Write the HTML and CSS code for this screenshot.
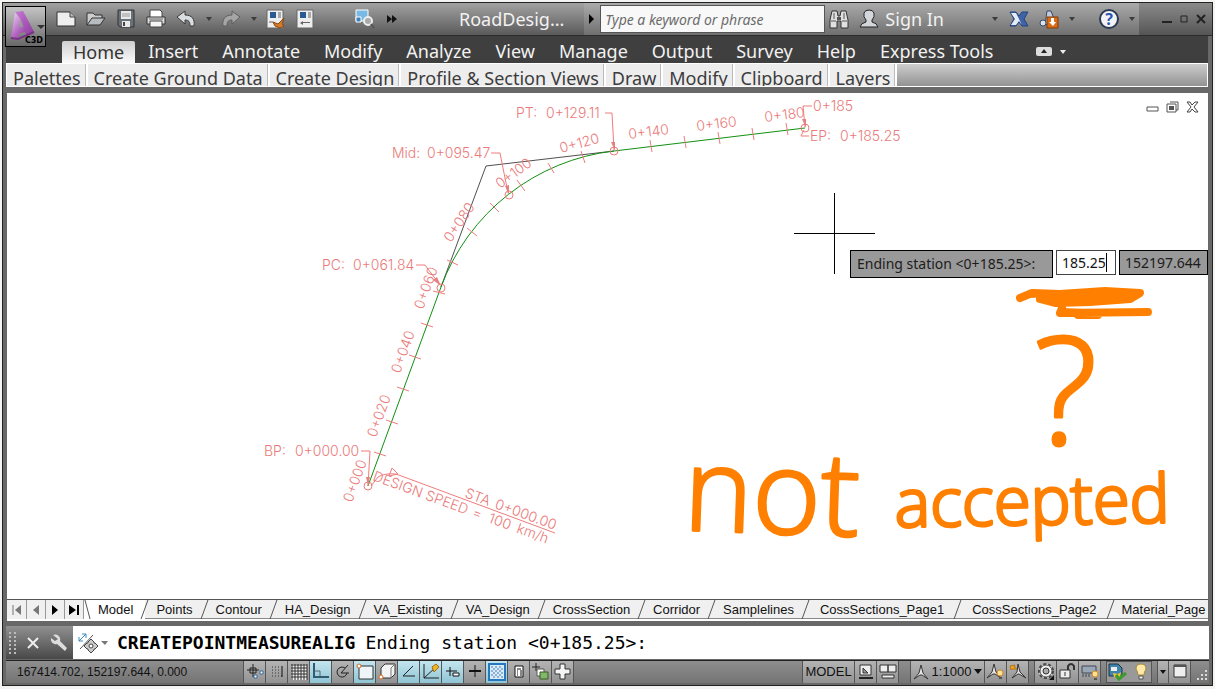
FILE: index.html
```html
<!DOCTYPE html>
<html lang="en">
<head>
    <meta charset="utf-8">
    <title>RoadDesign</title>
    <link rel="stylesheet" href="styles.css">
</head>
<body>
    <div class="window">
        <header class="titlebar">
            <button class="app-button" aria-label="Application menu">
                <svg width="38" height="38" viewBox="0 0 38 38">
                    <defs>
                        <linearGradient id="logo" x1="0" y1="0" x2="1" y2="1">
                            <stop offset="0" stop-color="#f3dff5"/>
                            <stop offset="0.5" stop-color="#b568c4"/>
                            <stop offset="1" stop-color="#64256f"/>
                        </linearGradient>
                    </defs>
                    <path d="M4 30 L8 4 L16 3 L27 24 L20 28 L18 24 L12 26 L11 31 Z M12 20 L17 18 L13 10 Z" fill="url(#logo)" fill-rule="evenodd"/>
                    <path d="M16 3 L27 24 L20 28 L13 10 L8 4 Z" fill="#a44fb5" opacity="0.6"/>
                    <path d="M4 30 L11 31 L27 24" fill="none" stroke="#7a3389" stroke-width="2"/>
                    <path d="M30 17h8l-4 4z" fill="#333"/>
                </svg>
                <span>C3D</span>
            </button>
            <div class="quick-access">
                <button aria-label="New"><svg width="20" height="20" viewBox="0 0 20 20"><path d="M1 3h13l5 5v9H1z" fill="#eee" stroke="#333"/><path d="M14 3v5h5" fill="#bbb" stroke="#444"/></svg></button>
                <button aria-label="Open"><svg width="20" height="20" viewBox="0 0 20 20"><path d="M1 16V4h6l2 2h7v3" fill="#ccc" stroke="#333"/><path d="M1 16l5-7h13l-5 7z" fill="#b6bcc0" stroke="#333"/></svg></button>
                <button aria-label="Save"><svg width="20" height="20" viewBox="0 0 20 20"><path d="M2 1h16v17H4l-2-2z" fill="#687078" stroke="#333"/><path d="M5 2h10v8H5zM6 12h8v6H6z" fill="#e8e8e8"/><path d="M7 13h2v4H7z" fill="#444"/><path d="M6 5h8M6 7h8" stroke="#999"/></svg></button>
                <button aria-label="Print"><svg width="20" height="20" viewBox="0 0 20 20"><path d="M4 8V1h10l2 2v5" fill="#fff" stroke="#444"/><path d="M1 8h18v7H1z" fill="#ddd" stroke="#333"/><path d="M4 12h12v6H4z" fill="#f5f5f5" stroke="#444"/><path d="M3 10h14" stroke="#666"/></svg></button>
                <button aria-label="Undo"><svg width="20" height="20" viewBox="0 0 20 20"><path d="M1 8l8-6v4c7 0 10 4 9 11h-4c0-4-1-6-5-6v4z" fill="#d9dde0" stroke="#3a3a3a"/></svg></button>
                <button class="drop" aria-label="Undo list"></button>
                <button aria-label="Redo"><svg width="20" height="20" viewBox="0 0 20 20"><path d="M19 8l-8-6v4C4 6 1 10 2 17h4c0-4 1-6 5-6v4z" fill="#a5a5a5" stroke="#5e5e5e"/></svg></button>
                <button class="drop" aria-label="Redo list"></button>
                <button aria-label="Sheet set"><svg width="20" height="20" viewBox="0 0 20 20"><path d="M1 1h16v18H1z" fill="#eee" stroke="#666"/><path d="M4 3h6v6H4z" fill="#285a94"/><path d="M12 4h3M12 6h3M12 8h3M3 13h4" stroke="#666"/><path d="M7 13l5 2 6-6-2 6 2 2-4 2-5-2z" fill="#d67b28" stroke="#8a4a13"/></svg></button>
                <button aria-label="Layer properties"><svg width="20" height="20" viewBox="0 0 20 20"><path d="M1 1h16v18H1z" fill="#eee" stroke="#666"/><path d="M4 3h6v6H4z" fill="#285a94"/><path d="M12 4h3M12 6h3M12 8h3" stroke="#666"/><path d="M4 14l3-2v1h7v1H7v2z" fill="#666"/></svg></button>
                <button class="find" aria-label="Find object"><svg width="20" height="20" viewBox="0 0 20 20"><path d="M1 1h12v11H1z" fill="#79b9e4" stroke="#fff"/><path d="M1 8h5v5H1z" fill="#3d81b9" stroke="#fff"/><circle cx="13" cy="12" r="4" fill="#aaa" stroke="#eee" stroke-width="2"/><path d="M16 15l3 4" stroke="#555" stroke-width="2"/></svg></button>
                <button class="more" aria-label="More tools"><svg width="12" height="10" viewBox="0 0 12 10"><path d="M2 1l5 4-5 4zM7 1l5 4-5 4z" fill="#111"/></svg></button>
            </div>
            <h1>RoadDesig...</h1>
            <div class="infocenter">
                <svg class="arrow-right" width="5" height="10" viewBox="0 0 5 10"><path d="M0 0l5 5-5 5z" fill="#000"/></svg>
                <input class="search" type="text" aria-label="Search" placeholder="Type a keyword or phrase">
                <button aria-label="Search help"><svg width="20" height="20" viewBox="0 0 20 20"><path d="M3 2h5l1 5h2l1-5h5l2 9v8h-7v-7H8v7H1v-8z" fill="#e0e0e0" stroke="#333"/><path d="M8 8h4v3H8z" fill="#555"/><path d="M2 12h5M13 12h5M5 4v6M15 4v6" stroke="#555"/></svg></button>
                <button class="sign-in"><svg width="20" height="20" viewBox="0 0 20 20"><path d="M1 18q1-4 6-5v-2Q4 8 5 4q1-3 5-3t5 3q1 4-2 7v2q5 1 6 5z" fill="#d3d6da" stroke="#222"/></svg>Sign In</button>
                <button class="drop" aria-label="Account menu"></button>
                <button class="exchange" aria-label="Exchange"><svg width="20" height="20" viewBox="0 0 20 20"><path d="M1 3h6l3 4 3-4h6l-4 7 4 7h-6l-3-4-3 4H1l4-7z" fill="#3e64a8" stroke="#26427e"/><path d="M2 4h5l6 12-3-4-3 4H2l4-6z" fill="#e6ecf5"/></svg></button>
                <button aria-label="Updates"><svg width="20" height="20" viewBox="0 0 20 20"><path d="M8 2h4l5 13H9L6 16z" fill="#c5ccd6" stroke="#34496c"/><circle cx="4" cy="14" r="3" fill="#dde3ec" stroke="#34496c"/><path d="M8 8h11v11H8z" fill="#d96c16" stroke="#843b05"/><path d="M12 9h3v4h2l-3 4-4-4h2z" fill="#fff"/></svg></button>
                <button class="drop" aria-label="Updates list"></button>
                <button class="help" aria-label="Help">?</button>
                <button class="drop" aria-label="Help menu"></button>
            </div>
            <div class="window-controls">
                <button aria-label="Minimize"><svg width="10" height="10" viewBox="0 0 10 10"><path d="M0 8h10" stroke="#222" stroke-width="2"/></svg></button>
                <button aria-label="Maximize"><svg width="10" height="10" viewBox="0 0 10 10"><path d="M2 2h6v6H2z" fill="none" stroke="#222"/></svg></button>
                <button aria-label="Close"><svg width="10" height="10" viewBox="0 0 10 10"><path d="M1 1l8 8M9 1l-8 8" stroke="#222" stroke-width="2"/></svg></button>
            </div>
        </header>

        <nav class="ribbon-tabs">
            <a href="#" class="active">Home</a>
            <a href="#">Insert</a>
            <a href="#">Annotate</a>
            <a href="#">Modify</a>
            <a href="#">Analyze</a>
            <a href="#">View</a>
            <a href="#">Manage</a>
            <a href="#">Output</a>
            <a href="#">Survey</a>
            <a href="#">Help</a>
            <a href="#">Express Tools</a>
            <button class="ribbon-toggle" aria-label="Minimize ribbon"><svg width="30" height="10" viewBox="0 0 30 10"><rect x="0" y="0" width="16" height="9" rx="2" fill="#ddd"/><path d="M5 6l3-4 3 4z" fill="#222"/><path d="M24 3h6l-3 4z" fill="#eee"/></svg></button>
        </nav>

        <div class="panels">
            <button>Palettes</button>
            <button>Create Ground Data</button>
            <button>Create Design</button>
            <button>Profile &amp; Section Views</button>
            <button>Draw</button>
            <button>Modify</button>
            <button>Clipboard</button>
            <button>Layers</button>
        </div>

        <main class="drawing">
            <svg class="model" width="100%" height="100%">
                <g transform="translate(-7 -93)">
                    <!-- tangents and alignment -->
                    <path class="tangent" d="M441 287L486 166L614 151"/>
                    <path class="alignment" d="M368 486L441 287A210 210 0 0 1 614 151L805 128"/>
                    <!-- station ticks -->
                    <path class="mark" d="M374 452l12 4M386 420l12 4M397 387l12 4M409 355l12 4M421 323l12 4M433 291l12 3M447 260l11 5M467 228l10 8M490 203l9 9M517 180l8 11M548 163l6 10M581 151l4 12M650 140l2 12M684 136l2 12M718 132l2 12M752 128l2 12M786 123l2 12"/>
                    <!-- geometry points and leaders -->
                    <g class="mark">
                        <circle cx="368" cy="486" r="4"/>
                        <circle cx="441" cy="288" r="4"/>
                        <circle cx="509" cy="195" r="4"/>
                        <circle cx="614" cy="151" r="4"/>
                        <circle cx="805" cy="128" r="4"/>
                        <path d="M361 451H370L368 486M416 265H425L440 285M491 153H500L508 193M605 113H612L614 150M812 106H803L805 127M809 136H801L804 130"/>
                        <path d="M371 486L378 477Q384 473 396 474L555 533M389 476L392 468L398 474Z"/>
                    </g>
                    <path class="arrowhead" d="M366 477h4l-2 9zM433 280l4-3 4 9zM505 186l4-1v10zM611 142h4v9zM802 119h4v9z"/>
                    <g class="station">
                        <text transform="translate(352 503) rotate(-70)">0+000</text>
                        <text transform="translate(376 438) rotate(-70)">0+020</text>
                        <text transform="translate(400 374) rotate(-70)">0+040</text>
                        <text transform="translate(423 310) rotate(-70)">0+060</text>
                        <text transform="translate(451 243) rotate(-56)">0+080</text>
                        <text transform="translate(500 189) rotate(-36)">0+100</text>
                        <text transform="translate(561 153) rotate(-15)">0+120</text>
                        <text transform="translate(629 139) rotate(-7)">0+140</text>
                        <text transform="translate(697 131) rotate(-7)">0+160</text>
                        <text transform="translate(765 122) rotate(-7)">0+180</text>
                        <text><tspan x="264" y="456">BP:</tspan><tspan x="295">0+000.00</tspan></text>
                        <text><tspan x="322" y="270">PC:</tspan><tspan x="353">0+061.84</tspan></text>
                        <text><tspan x="392" y="158">Mid:</tspan><tspan x="427">0+095.47</tspan></text>
                        <text><tspan x="516" y="118">PT:</tspan><tspan x="546">0+129.11</tspan></text>
                        <text x="813" y="111">0+185</text>
                        <text><tspan x="810" y="141">EP:</tspan><tspan x="840">0+185.25</tspan></text>
                        <text transform="translate(464 497) rotate(20)"><tspan x="0">STA</tspan><tspan x="32">0+000.00</tspan></text>
                        <text transform="translate(372 480) rotate(20)"><tspan x="0">DESIGN</tspan><tspan x="56">SPEED</tspan><tspan x="106">=</tspan><tspan x="123">100</tspan><tspan x="153">km/h</tspan></text>
                    </g>
                    <path class="cursor" d="M794 233H875M834 193V274"/>
                    <!-- red-lining -->
                    <path class="scribble" d="M1020 298L1032 293L1060 294L1105 291L1140 293L1130 299L1090 302L1055 303L1040 299L1062 297L1110 296M1062 308L1060 313L1148 312M1078 315H1098"/>
                    <g class="note">
                        <text class="note-mark" x="1034" y="444">?</text>
                        <text class="note-large" transform="translate(683 530) rotate(2)">not</text>
                        <text class="note-small" transform="translate(895 527) rotate(-1)">accepted</text>
                    </g>
                </g>
            </svg>
            <div class="document-controls">
                <button aria-label="Minimize drawing"><svg width="13" height="12" viewBox="0 0 13 12"><path d="M1 6h11v4H1z" fill="#fff" stroke="#555"/></svg></button>
                <button aria-label="Restore drawing"><svg width="13" height="12" viewBox="0 0 13 12"><path d="M4 1h8v8h-2M1 3h9v8H1z" fill="#fff" stroke="#555"/><path d="M4 6h3v2H4z" fill="none" stroke="#555" stroke-width="2"/></svg></button>
                <button aria-label="Close drawing"><svg width="13" height="12" viewBox="0 0 13 12"><path d="M1 1h3l2 3 3-3h3L8 6l4 5H9L6 8l-2 3H1l4-5z" fill="#fff" stroke="#444"/></svg></button>
            </div>
            <div class="dynamic-input">
                <label for="station">Ending station &lt;0+185.25&gt;:</label>
                <div class="station-box"><input id="station" type="text" value="185.25"></div>
                <output>152197.644</output>
            </div>
        </main>

        <nav class="layout-tabs">
            <div class="tab-scroll">
                <button aria-label="First tab"><svg width="12" height="12" viewBox="0 0 12 12"><path d="M2 1v10" stroke="#777"/><path d="M10 1v10L4 6z" fill="#777"/></svg></button>
                <button aria-label="Previous tab"><svg width="12" height="12" viewBox="0 0 12 12"><path d="M9 1v10L3 6z" fill="#777"/></svg></button>
                <button aria-label="Next tab"><svg width="12" height="12" viewBox="0 0 12 12"><path d="M3 1v10l6-5z" fill="#000"/></svg></button>
                <button aria-label="Last tab"><svg width="12" height="12" viewBox="0 0 12 12"><path d="M1 1v10l7-5z" fill="#000"/><path d="M10 1v10" stroke="#000" stroke-width="2"/></svg></button>
            </div>
            <a href="#" class="active">Model</a>
            <a href="#">Points</a>
            <a href="#">Contour</a>
            <a href="#">HA_Design</a>
            <a href="#">VA_Existing</a>
            <a href="#">VA_Design</a>
            <a href="#">CrossSection</a>
            <a href="#">Corridor</a>
            <a href="#">Samplelines</a>
            <a href="#" class="long">CossSections_Page1</a>
            <a href="#" class="long">CossSections_Page2</a>
            <a href="#">Material_Page</a>
        </nav>

        <div class="command-line">
            <div class="command-tools">
                <svg width="8" height="24" viewBox="0 0 8 24"><path d="M1 1v22M6 1v22" stroke="#bbb" stroke-width="2" stroke-dasharray="2 2"/></svg>
                <button aria-label="Close command line"><svg width="12" height="12" viewBox="0 0 12 12"><path d="M1 1l10 10M11 1L1 11" stroke="#eee" stroke-width="2"/></svg></button>
                <button aria-label="Customize"><svg width="20" height="20" viewBox="0 0 20 20"><path d="M4 2a5 5 0 0 1 7 6l7 7-2 3-8-7a5 5 0 0 1-6-6l4 3 3-2z" fill="#ddd"/></svg></button>
            </div>
            <button class="recent" aria-label="Recent commands"><svg width="32" height="22" viewBox="0 0 32 22"><path d="M2 9l7-7M5 2h4v4M2 5v4h4" stroke="#3b8bc4" fill="none"/><path d="M3 17L16 3" stroke="#555"/><path d="M14 7l3 3v1h1l3 3-3 3h-1v1l-3 3-3-3v-1h-1l-3-3 3-3h1v-1z" fill="#ccc" stroke="#444"/><circle cx="14" cy="14" r="2" fill="#fff" stroke="#444"/><path d="M24 9h7l-3 4z" fill="#777"/></svg></button>
            <p><b>CREATEPOINTMEASUREALIG</b><span>Ending station &lt;0+185.25&gt;:</span></p>
        </div>

        <footer class="status-bar">
            <span class="coordinates">167414.702, 152197.644, 0.000</span>
            <div class="toggles">
                <button aria-label="Infer constraints"><svg width="20" height="20" viewBox="0 0 20 20"><path d="M2 8h12M8 2v13" stroke="#222"/><path d="M5 6h6v5H5z" fill="none" stroke="#222"/><path d="M9 13h3v3H9zM15 9h3v3h-3z" fill="#fff" stroke="#346a9e"/></svg></button>
                <button aria-label="Snap mode"><svg width="20" height="20" viewBox="0 0 20 20"><path d="M5 5h8M5 8h8M5 11h8M5 14h10" stroke="#333" stroke-dasharray="1 2"/><path d="M15 4v11" stroke="#111"/></svg></button>
                <button aria-label="Grid display"><svg width="20" height="20" viewBox="0 0 20 20"><path d="M2 2h16v16H2z" fill="#eee"/><path d="M2 3h16M2 6h16M2 9h16M2 12h16M2 15h16M3 2v16M6 2v16M9 2v16M12 2v16M15 2v16M18 2v16" stroke="#333"/></svg></button>
                <button class="on" aria-label="Ortho mode"><svg width="20" height="20" viewBox="0 0 20 20"><path d="M3 1v14h15" stroke="#345a72" stroke-width="2" fill="none"/><path d="M4 9h5v5" stroke="#567" fill="none"/></svg></button>
                <button aria-label="Polar tracking"><svg width="20" height="20" viewBox="0 0 20 20"><path d="M12 6a5 5 0 1 0 2 5M8 11l7-8M8 11h8" stroke="#222" fill="none"/></svg></button>
                <button class="on" aria-label="Object snap"><svg width="20" height="20" viewBox="0 0 20 20"><path d="M4 4h14v13H4z" fill="#eef5f8" stroke="#333"/><circle cx="4" cy="4" r="2" fill="#fff" stroke="#d76a1e"/></svg></button>
                <button aria-label="3D object snap"><svg width="20" height="20" viewBox="0 0 20 20"><path d="M4 6l4-4h10v10l-4 4H4z" fill="#f3f3f3" stroke="#333"/><path d="M14 6l4-4M14 6v10" stroke="#777"/><circle cx="4" cy="15" r="2" fill="#fff" stroke="#d76a1e"/></svg></button>
                <button class="on" aria-label="Object snap tracking"><svg width="20" height="20" viewBox="0 0 20 20"><path d="M14 4L4 14h12" stroke="#222" fill="none"/></svg></button>
                <button class="on" aria-label="Dynamic UCS"><svg width="20" height="20" viewBox="0 0 20 20"><path d="M3 2v14h15M3 16L15 5" stroke="#222" fill="none"/><path d="M11 5l4-3 3 3-5 5z" fill="#f0b428" stroke="#a56d0b"/></svg></button>
                <button class="on" aria-label="Dynamic input"><svg width="20" height="20" viewBox="0 0 20 20"><path d="M3 9h11M7 5v9" stroke="#111"/><path d="M10 11h6v3h-6z" fill="#fff" stroke="#111"/></svg></button>
                <button aria-label="Lineweight"><svg width="20" height="20" viewBox="0 0 20 20"><path d="M4 9h12" stroke="#111" stroke-width="2"/><path d="M10 3v12" stroke="#111"/></svg></button>
                <button class="on" aria-label="Transparency"><svg width="20" height="20" viewBox="0 0 20 20"><path d="M2 2h16v16H2z" fill="#d9ebf8" stroke="#2478c0" stroke-width="2"/><path d="M4 5h12M4 9h12M4 13h12" stroke="#8fb3d6" stroke-width="2" stroke-dasharray="2 2"/><path d="M6 7h10M6 11h10M6 15h10" stroke="#8fb3d6" stroke-width="2" stroke-dasharray="2 2"/></svg></button>
                <button aria-label="Quick properties"><svg width="20" height="20" viewBox="0 0 20 20"><path d="M6 4h8v11H6z" fill="#fff" stroke="#111" stroke-width="1"/><path d="M8 7h4M8 9h1M11 9h2M8 11h1M11 11h2M8 13h1M11 13h2" stroke="#111"/></svg></button>
                <button aria-label="Selection cycling"><svg width="20" height="20" viewBox="0 0 20 20"><path d="M1 5h8M5 1v8" stroke="#222"/><path d="M6 7h7v7H6z" fill="#fff" stroke="#555"/><path d="M9 10h8v7H9z" fill="#85b56b" stroke="#345e22"/></svg></button>
                <button aria-label="Annotation monitor"><svg width="20" height="20" viewBox="0 0 20 20"><path d="M7 2h5v5h5v5h-5v5H7v-5H2V7h5z" fill="#f5f5f5" stroke="#333"/></svg></button>
            </div>
            <div class="toggles view">
                <button class="space">MODEL</button>
                <button aria-label="Layout view"><svg width="20" height="20" viewBox="0 0 20 20"><path d="M4 3h11v10H4z" fill="#eee" stroke="#333"/><path d="M7 6v5h5z" fill="#999" stroke="#333"/><path d="M3 16h14" stroke="#222" stroke-width="2"/></svg></button>
                <button aria-label="Quick view drawings"><svg width="20" height="20" viewBox="0 0 20 20"><path d="M2 3h8v7H2zM10 3h8v7h-8zM4 13h12v3H4z" fill="#eee" stroke="#333"/></svg></button>
            </div>
            <div class="toggles">
                <button class="scale"><svg width="16" height="16" viewBox="0 0 16 16"><path d="M8 1l2 8 5 6-6-4H7l-6 4 5-6z" fill="#e5e5e5" stroke="#333"/></svg>1:1000<svg width="8" height="6" viewBox="0 0 8 6"><path d="M0 0h8L4 5z" fill="#111"/></svg></button>
                <button aria-label="Annotation visibility"><svg width="20" height="20" viewBox="0 0 20 20"><path d="M8 2l2 8 5 6-6-4H7l-6 4 5-6z" fill="#e5e5e5" stroke="#333"/><circle cx="14" cy="11" r="3" fill="#ffe09a" stroke="#d78a1e"/><path d="M13 15h3v2h-3z" fill="#555"/></svg></button>
                <button aria-label="Auto scale"><svg width="20" height="20" viewBox="0 0 20 20"><path d="M10 2l2 8 6 6-7-4h-1l-6 4 5-6z" fill="#e5e5e5" stroke="#333"/><path d="M2 4l5-1-1 2 3 2-5 0-1 1z" fill="#efa52a" stroke="#b87410"/></svg></button>
            </div>
            <div class="toggles">
                <button aria-label="Workspace"><svg width="20" height="20" viewBox="0 0 20 20"><circle cx="10" cy="9" r="7" fill="#eee" stroke="#444" stroke-width="2" stroke-dasharray="3 2"/><circle cx="10" cy="9" r="6" fill="#eee" stroke="#555"/><circle cx="10" cy="9" r="3" fill="#aaa" stroke="#333"/><path d="M18 13v5h-5z" fill="#111"/></svg></button>
                <button aria-label="Lock"><svg width="20" height="20" viewBox="0 0 20 20"><path d="M10 8V4q3-4 6 0v4" fill="none" stroke="#333" stroke-width="2"/><path d="M2 8h10v8H2z" fill="#eee" stroke="#333"/><path d="M7 10v4" stroke="#333"/></svg></button>
                <button aria-label="Hardware acceleration"><svg width="20" height="20" viewBox="0 0 20 20"><path d="M2 4h14v7H2z" fill="#98a7b5" stroke="#445"/><path d="M3 12v3M6 12v3M9 12v3" stroke="#445"/><circle cx="15" cy="12" r="3" fill="#ffe09a" stroke="#d78a1e"/><path d="M14 16h3v2h-3z" fill="#555"/></svg></button>
            </div>
            <div class="tray">
                <svg width="22" height="20" viewBox="0 0 22 20"><path d="M2 2h9l4 4v8H2z" fill="#3e84ad" stroke="#234"/><path d="M4 5h6v4H4z" fill="#eee"/><path d="M6 11l5 1 3-2-1 5H7z" fill="#f0c33c"/><path d="M9 13l3 4 7-6" fill="none" stroke="#3c9a2e" stroke-width="3"/></svg>
                <svg width="20" height="20" viewBox="0 0 20 20"><path d="M7 13q0-3-2-6 0-5 5-5t5 5q-2 3-2 6z" fill="#ffe9a8" stroke="#a88a3a"/><path d="M8 14h4v3H8z" fill="#eee" stroke="#555"/></svg>
            </div>
            <div class="toggles">
                <button class="tray-menu" aria-label="Status bar menu"><svg width="6" height="4" viewBox="0 0 6 4"><path d="M0 0h6L3 4z" fill="#111"/></svg></button>
                <button aria-label="Clean screen"><svg width="20" height="20" viewBox="0 0 20 20"><path d="M4 3h12v12H4z" fill="#eee" stroke="#333"/><path d="M4 4h12" stroke="#555" stroke-width="2"/></svg></button>
            </div>
            <svg class="grip" width="12" height="12" viewBox="0 0 12 12"><path d="M9 1h2v2H9zM5 5h2v2H5zM9 5h2v2H9zM1 9h2v2H1zM5 9h2v2H5zM9 9h2v2H9z" fill="#ddd"/></svg>
        </footer>
    </div>
</body>
</html>
```
FILE: styles.css
```css
* {
    box-sizing: border-box;
}
body {
    margin: 0;
    height: 100vh;
    padding: 2px 2px 3px;
    background: #f4f4f2;
    font-family: "Noto Sans", "Open Sans", sans-serif;
    font-size: 18px;
    overflow: hidden;
}
button {
    display: flex;
    align-items: center;
    justify-content: center;
    padding: 0;
    border: 0;
    background: none;
    color: inherit;
    font: inherit;
    cursor: pointer;
}
a {
    color: inherit;
    text-decoration: none;
}
svg {
    display: block;
    flex: none;
}
.window {
    display: flex;
    flex-direction: column;
    height: 100%;
    border: 1px solid #222;
    background: #686868;
}

/* title bar */
.titlebar {
    position: relative;
    display: flex;
    align-items: center;
    height: 33px;
    padding-left: 53px;
    border-bottom: 1px solid #2c2c2c;
    background: linear-gradient(#a2a2a2, #5a5a5a);
    color: #f2f2f2;
}
.app-button {
    position: absolute;
    top: 3px;
    left: 2px;
    z-index: 2;
    width: 41px;
    height: 41px;
    border: 1px solid #000;
    background: linear-gradient(#c4c4c4, #686868);
}
.app-button span {
    position: absolute;
    right: 2px;
    bottom: 0;
    color: #000;
    font: bold 8px/10px "DejaVu Sans", sans-serif;
}
.quick-access {
    display: flex;
    align-items: center;
    gap: 10px;
}
.drop {
    width: 5px;
    height: 20px;
}
.drop::before {
    content: "";
    flex: none;
    border: 3px solid transparent;
    border-top: 4px solid #3c3c3c;
    border-bottom: 0;
}
.find {
    margin-left: 29px;
}
.titlebar h1 {
    flex: 1;
    margin: 0;
    padding-right: 20px;
    font-size: 18px;
    font-weight: normal;
    line-height: 24px;
    text-align: right;
}
.infocenter {
    display: flex;
    align-items: center;
    gap: 10px;
    height: 32px;
    padding: 0 5px;
    background: linear-gradient(#aaa, #707070);
}
.arrow-right {
    margin-right: -4px;
}
.search {
    width: 225px;
    height: 28px;
    margin-right: -6px;
    padding: 4px;
    border: 1px solid #555;
    background: #f8f8f8;
    font: italic 14px/20px "Noto Sans", sans-serif;
}
.search::placeholder {
    color: #6c6c6c;
    opacity: 1;
}
.sign-in {
    gap: 6px;
}
.sign-in + .drop {
    margin-left: 38px;
}
.exchange {
    margin-left: 2px;
}
.help {
    width: 20px;
    height: 20px;
    margin-left: 15px;
    border: 2px solid #2b3a55;
    border-radius: 50%;
    background: #f4f4f4;
    color: #2857b4;
    font-size: 16px;
    font-weight: bold;
    line-height: 16px;
}
.window-controls {
    display: flex;
    align-items: center;
    gap: 7px;
    height: 32px;
    padding: 0 6px 0 23px;
    background: linear-gradient(#8a8a8a, #555);
}

/* ribbon */
.ribbon-tabs {
    display: flex;
    align-items: flex-end;
    gap: 24px;
    height: 27px;
    margin: 0 4px 0 3px;
    padding-left: 67px;
    background: #3f3f3f;
    color: #f2f2f2;
    line-height: 22px;
    white-space: nowrap;
}
.ribbon-tabs .active {
    margin: 0 -11px;
    padding: 0 11px;
    border-radius: 2px 2px 0 0;
    background: linear-gradient(#cfcfcf, #fafafa);
    color: #333;
}
.ribbon-tabs a {
    margin-bottom: 1px;
}
.ribbon-toggle {
    margin: 0 0 6px 18px;
}
.panels {
    display: flex;
    height: 24px;
    margin: 0 4px 0 3px;
    border: 1px solid #fff;
    background: linear-gradient(#cecece, #929292);
}
.panels button {
    height: 22px;
    padding: 6px 5px 0 6px;
    border-right: 2px solid #fff;
    background: #ededed;
    color: #3c3c3c;
    line-height: 22px;
    white-space: nowrap;
    overflow: hidden;
    box-shadow: inset -1px 0 #bbb;
}

/* drawing area */
.drawing {
    position: relative;
    flex: 1;
    min-height: 0;
    margin: 6px 4px 0;
    background: #fff;
    overflow: hidden;
}
.model {
    position: absolute;
    inset: 0;
}
.tangent {
    fill: none;
    stroke: #505050;
}
.alignment {
    fill: none;
    stroke: #119011;
}
.mark {
    fill: none;
    stroke: #ee7c7c;
}
.arrowhead {
    fill: #e98080;
}
.station {
    fill: #ea7a7a;
    font-family: Inter, sans-serif;
    font-size: 14px;
    font-weight: 300;
}
.cursor {
    fill: none;
    stroke: #000;
    shape-rendering: crispEdges;
}
.scribble {
    fill: #ff8000;
    stroke: #ff8000;
    stroke-width: 8px;
    stroke-linecap: round;
    stroke-linejoin: round;
}
.note {
    fill: #ff8000;
    stroke: #ff8000;
    stroke-width: 3px;
    stroke-linejoin: round;
    font-family: "Open Sans", sans-serif;
    font-weight: 300;
}
.note-mark {
    font-size: 150px;
}
.note-large {
    font-size: 116px;
}
.note-small {
    font-size: 67px;
}
.document-controls {
    position: absolute;
    top: 8px;
    right: 9px;
    display: flex;
    gap: 7px;
}
.dynamic-input {
    position: absolute;
    top: 157px;
    left: 843px;
    display: flex;
    align-items: flex-start;
    gap: 3px;
    color: #1c1c1c;
    font-size: 14px;
    line-height: 23px;
    white-space: nowrap;
}
.dynamic-input label {
    width: 203px;
    height: 28px;
    padding: 1px 6px;
    border: 1px solid #000;
    background: #999;
}
.station-box {
    position: relative;
}
.station-box::after {
    content: "";
    position: absolute;
    top: 3px;
    left: 50px;
    width: 1px;
    height: 19px;
    background: #000;
}
.station-box input {
    display: block;
    width: 60px;
    height: 25px;
    padding: 0 5px;
    border: 1px solid #444;
    background: #fff;
    color: #111;
    font: inherit;
}
.dynamic-input output {
    width: 89px;
    height: 25px;
    padding: 0 5px;
    border: 1px solid #000;
    background: #999;
}

/* layout tabs */
.layout-tabs {
    display: flex;
    height: 22px;
    margin: 0 4px;
    border-top: 1px solid #555;
    border-bottom: 2px solid #fff;
    background: #f0f0f0;
    color: #111;
    font: 13px/19px "Liberation Sans", sans-serif;
    overflow: hidden;
}
.tab-scroll {
    display: flex;
    flex: none;
    padding-left: 1px;
}
.tab-scroll button {
    width: 19px;
    border-right: 1px solid #999;
}
.layout-tabs a {
    position: relative;
    flex: none;
    padding: 0 12px 0 11px;
    border-bottom: 1px solid #888;
}
.layout-tabs a::after {
    content: "";
    position: absolute;
    top: 0;
    right: 0;
    height: 19px;
    border-left: 1px solid #555;
    transform: skewX(-20deg);
}
.layout-tabs .active {
    padding-left: 14px;
    border-bottom-color: #fff;
    background: #fff;
}
.layout-tabs .active::before {
    content: "";
    position: absolute;
    top: 0;
    left: 3px;
    height: 19px;
    border-left: 1px solid #555;
    transform: skewX(15deg);
}
.layout-tabs .long {
    padding: 0 14px;
}

/* command line */
.command-line {
    display: flex;
    align-items: center;
    height: 33px;
    margin: 5px 3px 1px;
    background: #fff;
}
.command-tools {
    display: flex;
    align-items: center;
    gap: 10px;
    width: 67px;
    height: 33px;
    padding-left: 3px;
    background: linear-gradient(#909090, #484848);
}
.recent {
    margin-left: 4px;
}
.command-line p {
    display: flex;
    gap: 10px;
    margin: 0 0 0 8px;
    color: #000;
    font: 18px/24px "DejaVu Sans Mono", monospace;
    white-space: nowrap;
}

/* status bar */
.status-bar {
    display: flex;
    align-items: center;
    height: 23px;
    margin: 0 3px 2px;
    border-top: 1px solid #222;
    background: linear-gradient(#8e8e8e, #747474);
    color: #111;
    font: 13px/20px "Liberation Sans", sans-serif;
}
.coordinates {
    width: 237px;
    padding-left: 11px;
    font-size: 12px;
}
.toggles {
    display: flex;
    margin-right: 5px;
    border-left: 1px solid #555;
}
.toggles button {
    width: 22px;
    height: 22px;
    border-right: 1px solid #555;
    background: linear-gradient(#b4b4b4, #929292);
}
.toggles .on {
    background: linear-gradient(#c3e6ef, #8fc5d4);
}
.toggles.view {
    margin-left: auto;
    margin-right: 11px;
}
.toggles .space {
    width: 52px;
}
.toggles .scale {
    gap: 3px;
    width: 74px;
}
.tray {
    display: flex;
    gap: 2px;
    margin-right: 5px;
    border: 1px solid #555;
    background: #999;
}
.toggles .tray-menu {
    width: 11px;
}
.grip {
    margin: 6px 1px 0 0;
}
```
